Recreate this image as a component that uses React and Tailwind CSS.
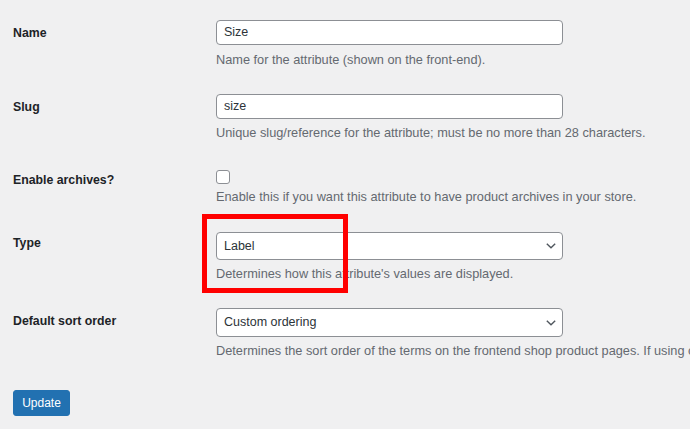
import React from 'react'

function Chevron() {
  return (
    <svg width="10" height="6" viewBox="0 0 10 6" className="shrink-0">
      <path d="M0.8 0.8l4.2 4L9.2 0.8" fill="none" stroke="#50575e" strokeWidth="1.4" />
    </svg>
  )
}

function Row({ label, labelTop, top, children, desc, descTop }) {
  return (
    <div className="flex items-start" style={{ marginTop: top }}>
      <div className="w-[203px] shrink-0 font-bold text-[12.3px] leading-[16px] text-[#1d2327]" style={{ marginTop: labelTop }}>
        {label}
      </div>
      <div className="flex flex-col">
        {children}
        <div className="text-[12.75px] leading-[16px] text-[#646970] whitespace-nowrap" style={{ marginTop: descTop }}>
          {desc}
        </div>
      </div>
    </div>
  )
}

function TextInput({ value }) {
  return (
    <div className="w-[347px] h-[25px] bg-white border border-[#8c8f94] rounded-[4px] flex items-center px-[7px] text-[12.5px] text-[#2c3338]">
      {value}
    </div>
  )
}

function Select({ value, h }) {
  return (
    <div className={`w-[347px] ${h} bg-white border border-[#8c8f94] rounded-[4px] flex items-center justify-between pl-[7px] pr-[6px] text-[12.5px] text-[#2c3338]`}>
      <span>{value}</span>
      <Chevron />
    </div>
  )
}

export default function App() {
  return (
    <div className="w-[690px] h-[429px] overflow-hidden bg-[#f0f0f1] pl-[13px] relative" style={{ fontFamily: '"Liberation Sans", Arial, sans-serif' }}>
      <Row label="Name" top={20} labelTop={5} desc="Name for the attribute (shown on the front-end)." descTop={7}>
        <TextInput value="Size" />
      </Row>
      <Row label="Slug" top={26} labelTop={5} desc="Unique slug/reference for the attribute; must be no more than 28 characters." descTop={6}>
        <TextInput value="size" />
      </Row>
      <Row label="Enable archives?" top={29} labelTop={2} desc="Enable this if you want this attribute to have product archives in your store." descTop={5}>
        <div className="w-[14px] h-[14px] bg-white border border-[#8c8f94] rounded-[3px]" />
      </Row>
      <Row label="Type" top={27} labelTop={3} desc="Determines how this attribute's values are displayed." descTop={6}>
        <Select value="Label" h="h-[28px]" />
      </Row>
      <Row label="Default sort order" top={26} labelTop={5} desc="Determines the sort order of the terms on the frontend shop product pages. If using custom ordering, you can drag and drop the terms in this attribute." descTop={6}>
        <Select value="Custom ordering" h="h-[29px]" />
      </Row>
      <button className="mt-[31px] w-[57px] h-[26px] bg-[#2271b1] text-white text-[12px] rounded-[3px] border border-[#2271b1]">
        Update
      </button>
      <div className="absolute left-[202px] top-[214px] w-[146px] h-[79px] border-[5px] border-[#ff0000] pointer-events-none" />
    </div>
  )
}
